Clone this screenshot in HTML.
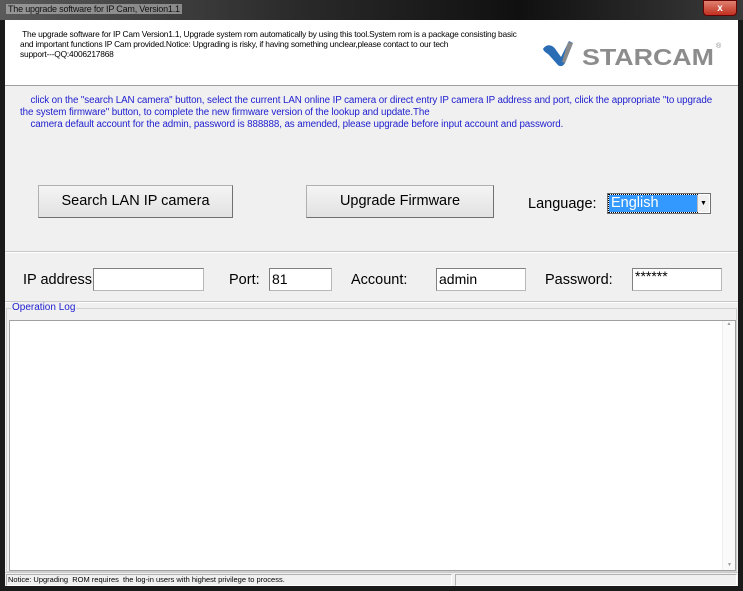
<!DOCTYPE html>
<html><head><meta charset="utf-8"><style>
*{margin:0;padding:0;box-sizing:border-box}
body{width:743px;height:591px;background:#1a1a1a;position:relative;overflow:hidden;font-family:"Liberation Sans",sans-serif}
.title{position:absolute;left:0;top:0;width:743px;height:20px;background:linear-gradient(90deg,#5a5a5a 0%,#2a2a2a 40%,#101010 70%,#3a3a3a 100%)}
.title span{position:absolute;left:6px;top:4px;font-size:9px;color:#111;background:rgba(200,200,200,.55);padding:0 2px;letter-spacing:-.2px}
.close{position:absolute;left:703px;top:0;width:34px;height:16px;background:linear-gradient(#e08070,#c03020);border-radius:0 0 4px 4px;color:#fff;font-size:10px;font-weight:bold;text-align:center;line-height:15px;border:1px solid #600}
.win{position:absolute;left:5px;top:20px;width:733px;height:566px;background:#f0f0f0}
.head{position:absolute;left:0;top:0;width:733px;height:66px;background:#fff;border-bottom:1px solid #a0a0a0}
.htxt{position:absolute;left:15px;top:9px;width:530px;font-size:8.4px;line-height:10px;color:#000;letter-spacing:-.2px;white-space:nowrap}
.logo{position:absolute;left:535px;top:17px}
.blue{position:absolute;left:15px;top:75px;width:720px;font-size:9.8px;line-height:12px;color:#2020d0;letter-spacing:-.1px;white-space:nowrap}
.btn{position:absolute;height:33px;background:linear-gradient(#f4f4f4,#e2e2e2);border:1px solid #b0b0b0;border-right-color:#707070;border-bottom-color:#707070;font-size:14.5px;text-align:center;line-height:31px;color:#000}
.lbl{position:absolute;font-size:14.5px;color:#000}
.inp{position:absolute;height:23px;background:#fff;border:1px solid #b8b8b8;border-top-color:#808080;border-left-color:#808080;font-size:14px;line-height:20px;padding-left:2px}
.sep{position:absolute;left:0;width:733px;height:2px;border-top:1px solid #c8c8c8;border-bottom:1px solid #fff}
</style></head><body>
<div class="title"><span>The upgrade software for IP Cam, Version1.1</span></div>
<div class="close">x</div>
<div class="win">
 <div class="head">
  <div class="htxt">&nbsp;The upgrade software for IP Cam Version1.1, Upgrade system rom automatically by using this tool.System rom is a package consisting basic<br>and important functions IP Cam provided.Notice: Upgrading is risky, if having something unclear,please contact to our tech<br>support---QQ:4006217868</div>
  <svg class="logo" width="190" height="34" viewBox="0 0 190 34">
   <path d="M3 12 C7 6 13 8 16 13 L21 20 L29 4 L33 6 L25 26 C23 30 19 30 17 27 L9 18 C7 16 4 15 3 12Z" fill="#2a6db5"/>
   <path d="M28 5 L33 6 L25 26 L22 25Z" fill="#8a8a8a"/>
   <text x="42" y="28" font-family="Liberation Sans,sans-serif" font-weight="bold" font-size="23" fill="#8c8c8c" textLength="132" lengthAdjust="spacingAndGlyphs">STARCAM</text>
   <text x="176" y="11" font-size="7" fill="#888">®</text>
  </svg>
 </div>
 <div class="blue">&nbsp;&nbsp;&nbsp;&nbsp;click on the "search LAN camera" button, select the current LAN online IP camera or direct entry IP camera IP address and port, click the appropriate "to upgrade<br>the system firmware" button, to complete the new firmware version of the lookup and update.The<br>&nbsp;&nbsp;&nbsp;&nbsp;camera default account for the admin, password is 888888, as amended, please upgrade before input account and password.</div>
 <div class="btn" style="left:33px;top:165px;width:195px">Search LAN IP camera</div>
 <div class="btn" style="left:301px;top:165px;width:188px">Upgrade Firmware</div>
 <div class="lbl" style="left:523px;top:176px">Language:</div>
 <div style="position:absolute;left:602px;top:173px;width:104px;height:21px;background:#fff;border:1px solid #707070">
  <div style="position:absolute;left:1px;top:1px;width:88px;height:17px;background:#3399ff;color:#fff;font-size:14.5px;line-height:17px;padding-left:2px;outline:1px dotted #000">English</div>
  <div style="position:absolute;right:1px;top:1px;width:12px;height:17px;background:#f0f0f0;border-left:1px solid #bbb;font-size:7px;text-align:center;line-height:17px">▼</div>
 </div>
 <div class="sep" style="top:231px"></div>
 <div class="lbl" style="left:18px;top:252px">IP address</div>
 <div class="inp" style="left:88px;top:248px;width:111px"></div>
 <div class="lbl" style="left:224px;top:252px">Port:</div>
 <div class="inp" style="left:264px;top:248px;width:63px">81</div>
 <div class="lbl" style="left:346px;top:252px">Account:</div>
 <div class="inp" style="left:431px;top:248px;width:90px">admin</div>
 <div class="lbl" style="left:540px;top:252px">Password:</div>
 <div class="inp" style="left:627px;top:248px;width:90px;line-height:14px">******</div>
 <div class="sep" style="top:281px"></div>
 <div style="position:absolute;left:1px;top:288px;width:731px;height:264px;border:1px solid #d0d0d0"></div>
 <div style="position:absolute;left:6px;top:282px;font-size:10px;color:#2020d0;background:#f0f0f0;padding:0 1px">Operation Log</div>
 <div style="position:absolute;left:4px;top:300px;width:727px;height:251px;background:#fff;border:1px solid #a0a0a0">
  <div style="position:absolute;right:0;top:0;width:13px;height:249px;background:#fafafa;border-left:1px solid #eee;font-size:5px;color:#999;text-align:center">▲<div style="position:absolute;bottom:2px;width:13px">▼</div></div>
 </div>
 <div style="position:absolute;left:0;top:552px;width:733px;height:14px;background:#f0f0f0;border-top:1px solid #ccc">
  <div style="position:absolute;left:1px;top:1px;width:446px;height:12px;border:1px solid #b0b0b0;border-right-color:#fff;border-bottom-color:#fff;font-size:7.5px;line-height:10px;padding-left:1px">Notice: Upgrading&nbsp; ROM requires&nbsp; the log-in users with highest privilege to process.</div>
  <div style="position:absolute;left:450px;top:1px;width:282px;height:12px;border:1px solid #b0b0b0;border-right-color:#fff;border-bottom-color:#fff"></div>
 </div>
</div>
</body></html>
